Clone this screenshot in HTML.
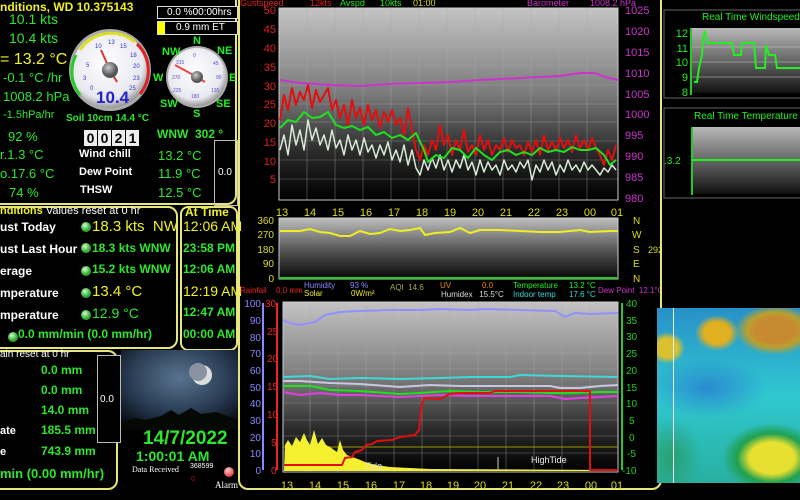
<!DOCTYPE html>
<html><head><meta charset="utf-8"><style>
*{margin:0;padding:0;box-sizing:border-box}
body{width:800px;height:500px;background:#000;overflow:hidden;position:relative;font-family:"Liberation Sans",Arial,sans-serif}
.t{position:absolute;white-space:nowrap;line-height:1}
.g{color:#2ee62e}.y{color:#f0f020}.w{color:#fff}
.b{font-weight:bold}
.box{position:absolute;border:1px solid #e8e8a0}
</style></head><body>

<!-- LEFT TOP PANEL -->
<div class="box" style="left:-10px;top:-10px;width:247px;height:215px;border:2px solid #e6e67a;border-radius:10px"></div>
<div class="t y b" style="left:0;top:1px;font-size:12px">nditions, WD 10.375143</div>
<div class="box" style="left:157px;top:6px;width:81px;height:13px;background:#000;border:1px solid #ddd"></div>
<div class="t w" style="left:167px;top:8px;font-size:10px">0.0 %00:00hrs</div>
<div class="box" style="left:157px;top:21px;width:81px;height:14px;border:1px solid #ddd;background:#000"></div>
<div style="position:absolute;left:158px;top:22px;width:7px;height:12px;background:#ff0"></div>
<div class="t w" style="left:176px;top:23px;font-size:10px">0.9 mm ET</div>

<div class="t g" style="left:9px;top:12px;font-size:14px">10.1 kts</div>
<div class="t g" style="left:9px;top:31px;font-size:14px">10.4 kts</div>
<div class="t y" style="left:0;top:52px;font-size:16px">= 13.2 °C</div>
<div class="t g" style="left:3px;top:71px;font-size:13px">-0.1 °C /hr</div>
<div class="t g" style="left:3px;top:90px;font-size:13px">1008.2 hPa</div>
<div class="t g" style="left:3px;top:110px;font-size:11px">-1.5hPa/hr</div>
<div class="t g b" style="left:66px;top:114px;font-size:10px">Soil 10cm 14.4 °C</div>
<div class="t g" style="left:8px;top:130px;font-size:13px">92 %</div>
<div style="position:absolute;left:84px;top:130px;display:flex;gap:1px">
<div style="width:13px;height:16px;background:#eee;color:#000;font:bold 14px 'Liberation Sans';text-align:center;line-height:16px">0</div>
<div style="width:13px;height:16px;background:#eee;color:#000;font:bold 14px 'Liberation Sans';text-align:center;line-height:16px">0</div>
<div style="width:13px;height:16px;background:#eee;color:#000;font:bold 14px 'Liberation Sans';text-align:center;line-height:16px">2</div>
<div style="width:13px;height:16px;background:#eee;color:#000;font:bold 14px 'Liberation Sans';text-align:center;line-height:16px">1</div></div>
<div class="t g b" style="left:157px;top:128px;font-size:12px">WNW &nbsp;302 °</div>
<div class="t g" style="left:0;top:148px;font-size:13px">r.1.3 °C</div>
<div class="t g" style="left:0;top:167px;font-size:13px">o.17.6 °C</div>
<div class="t g" style="left:9px;top:186px;font-size:13px">74 %</div>
<div class="t w b" style="left:79px;top:149px;font-size:11px">Wind chill</div>
<div class="t w b" style="left:79px;top:167px;font-size:11px">Dew Point</div>
<div class="t w b" style="left:80px;top:185px;font-size:11px">THSW</div>
<div class="t g" style="left:158px;top:149px;font-size:13px">13.2 °C</div>
<div class="t g" style="left:158px;top:167px;font-size:13px">11.9 °C</div>
<div class="t g" style="left:158px;top:186px;font-size:13px">12.5 °C</div>
<div class="box" style="left:214px;top:140px;width:24px;height:66px;border:1px solid #bbb"></div>
<div class="t w" style="left:218px;top:168px;font-size:10px">0.0</div>

<!-- gauges -->
<svg style="position:absolute;left:0;top:0" width="240" height="130">
<defs><radialGradient id="gg" cx="45%" cy="40%" r="60%"><stop offset="0" stop-color="#fff"/><stop offset=".8" stop-color="#e8e8f0"/><stop offset="1" stop-color="#9a9a9a"/></radialGradient>
<radialGradient id="hub" cx="40%" cy="35%"><stop offset="0" stop-color="#ccc"/><stop offset="1" stop-color="#555"/></radialGradient></defs>
<circle cx="110" cy="70" r="41" fill="#aaa"/><circle cx="110" cy="70" r="38" fill="url(#gg)"/>
<path d="M80 95 A37 37 0 0 1 76 55" stroke="#2c2" stroke-width="3" fill="none"/>
<path d="M80 50 A37 37 0 0 1 135 42" stroke="#dd2" stroke-width="3" fill="none"/>
<path d="M137 44 A37 37 0 0 1 140 94" stroke="#d22" stroke-width="3" fill="none"/>
<g fill="#33c" font-size="6"><text x="95" y="48">10</text><text x="108" y="44">13</text><text x="120" y="48">15</text><text x="130" y="57">18</text><text x="133" y="68">20</text><text x="133" y="80">23</text><text x="129" y="90">25</text><text x="83" y="80">3</text><text x="90" y="90">0</text><text x="86" y="67">5</text></g>
<line x1="110" y1="70" x2="101" y2="50" stroke="#d33" stroke-width="2"/><line x1="110" y1="70" x2="117" y2="82" stroke="#d33" stroke-width="2"/>
<circle cx="110" cy="70" r="8" fill="url(#hub)"/>
<text x="96" y="103" fill="#22c" font-size="17" font-weight="bold" font-family="Liberation Sans">10.4</text>
<circle cx="197" cy="77" r="31" fill="#aaa"/><circle cx="197" cy="77" r="29" fill="url(#gg)"/>
<g fill="#55c" font-size="5"><text x="193" y="57">0</text><text x="213" y="65">45</text><text x="216" y="79">90</text><text x="211" y="92">135</text><text x="191" y="98">180</text><text x="173" y="92">225</text><text x="172" y="79">270</text><text x="176" y="64">315</text></g>
<line x1="197" y1="77" x2="175" y2="65" stroke="#e44" stroke-width="2"/><line x1="197" y1="77" x2="205" y2="82" stroke="#e44" stroke-width="2"/>
<circle cx="197" cy="77" r="6" fill="url(#hub)"/>
<g fill="#2e2" font-weight="bold" font-size="11" font-family="Liberation Sans"><text x="193" y="44">N</text><text x="162" y="55">NW</text><text x="217" y="54">NE</text><text x="153" y="81">W</text><text x="229" y="81">E</text><text x="160" y="107">SW</text><text x="216" y="107">SE</text><text x="193" y="117">S</text></g>
</svg>

<!-- LEFT MID PANEL -->
<div class="box" style="left:-10px;top:206px;width:188px;height:143px;border:2px solid #e6e67a;border-radius:10px"></div>
<div class="box" style="left:180px;top:206px;width:58px;height:145px;border:2px solid #e6e67a;border-radius:8px"></div>
<div class="t" style="left:0;top:206px;font-size:11px"><span class="y b">nditions</span> <span class="w">Values reset at 0 hr</span></div>
<div class="t y b" style="left:185px;top:206px;font-size:12px">At Time</div>
<div class="t w b" style="left:0;top:221px;font-size:12px">ust Today</div>
<div class="t w b" style="left:0;top:243px;font-size:12px">ust Last Hour</div>
<div class="t w b" style="left:0;top:265px;font-size:12px">erage</div>
<div class="t w b" style="left:0;top:287px;font-size:12px">mperature</div>
<div class="t w b" style="left:0;top:309px;font-size:12px">mperature</div>
<svg style="position:absolute;left:0;top:200px" width="180" height="150"><defs><radialGradient id="ball" cx="40%" cy="35%"><stop offset="0" stop-color="#cfc"/><stop offset="1" stop-color="#3a3"/></radialGradient></defs>
<circle cx="86" cy="27" r="5" fill="url(#ball)"/><circle cx="86" cy="48" r="5" fill="url(#ball)"/><circle cx="86" cy="71" r="5" fill="url(#ball)"/><circle cx="86" cy="93" r="5" fill="url(#ball)"/><circle cx="86" cy="115" r="5" fill="url(#ball)"/><circle cx="13" cy="137" r="5" fill="url(#ball)"/></svg>
<div class="t y" style="left:92px;top:219px;font-size:15px">18.3 kts &nbsp;NW</div>
<div class="t g b" style="left:92px;top:242px;font-size:12px">18.3 kts WNW</div>
<div class="t g b" style="left:92px;top:263px;font-size:12px">15.2 kts WNW</div>
<div class="t y" style="left:92px;top:284px;font-size:15px">13.4 °C</div>
<div class="t g" style="left:92px;top:306px;font-size:14px">12.9 °C</div>
<div class="t g b" style="left:18px;top:328px;font-size:12px">0.0 mm/min (0.0 mm/hr)</div>
<div class="t y" style="left:183px;top:219px;font-size:14px">12:06 AM</div>
<div class="t g b" style="left:183px;top:242px;font-size:12px">23:58 PM</div>
<div class="t g b" style="left:183px;top:263px;font-size:12px">12:06 AM</div>
<div class="t y" style="left:183px;top:284px;font-size:14px">12:19 AM</div>
<div class="t g b" style="left:183px;top:306px;font-size:12px">12:47 AM</div>
<div class="t g b" style="left:183px;top:328px;font-size:12px">00:00 AM</div>

<!-- LEFT BOTTOM -->
<div class="box" style="left:-10px;top:350px;width:128px;height:140px;border:2px solid #e6e67a;border-radius:10px"></div>
<div class="t w" style="left:0;top:350px;font-size:10px">ain reset at 0 hr</div>
<div class="t g b" style="left:41px;top:364px;font-size:12px">0.0 mm</div>
<div class="t g b" style="left:41px;top:384px;font-size:12px">0.0 mm</div>
<div class="t g b" style="left:41px;top:404px;font-size:12px">14.0 mm</div>
<div class="t w b" style="left:0;top:426px;font-size:11px">ate</div>
<div class="t g b" style="left:41px;top:424px;font-size:12px">185.5 mm</div>
<div class="t w b" style="left:0;top:447px;font-size:11px">e</div>
<div class="t g b" style="left:41px;top:445px;font-size:12px">743.9 mm</div>
<div class="t g b" style="left:0;top:467px;font-size:13px">min (0.00 mm/hr)</div>
<div class="box" style="left:97px;top:355px;width:24px;height:88px;border:1px solid #bbb;background:#000"></div>
<div class="t w" style="left:100px;top:395px;font-size:10px">0.0</div>
<svg style="position:absolute;left:121px;top:350px" width="117" height="80"><defs><radialGradient id="sky" cx="50%" cy="35%" r="70%"><stop offset="0" stop-color="#5a7390"/><stop offset=".6" stop-color="#2a3d55"/><stop offset="1" stop-color="#0a0f18"/></radialGradient></defs>
<rect width="117" height="80" fill="url(#sky)"/><circle cx="81" cy="25" r="10" fill="#ddd"/><circle cx="77" cy="22" r="9" fill="#8a94a0"/>
<path d="M0 80 L0 72 L15 68 L25 70 L40 66 L50 60 L58 65 L70 58 L80 64 L95 62 L117 70 L117 80Z" fill="#050805"/></svg>
<div class="t g b" style="left:143px;top:429px;font-size:19px">14/7/2022</div>
<div class="t g b" style="left:136px;top:449px;font-size:14px">1:00:01 AM</div>
<div class="t w" style="left:132px;top:466px;font-size:8px;font-family:'Liberation Serif'">Data Received</div>
<div class="t w" style="left:190px;top:463px;font-size:7px">368599</div>
<div class="t" style="left:191px;top:476px;font-size:7px;color:#c00">0</div>
<div style="position:absolute;left:224px;top:467px;width:10px;height:10px;border-radius:50%;background:radial-gradient(circle at 40% 35%,#fcc,#d00)"></div>
<div class="t w" style="left:215px;top:481px;font-size:9px;font-family:'Liberation Serif'">Alarm</div>

<!-- CENTER PANEL -->
<div class="box" style="left:238px;top:-10px;width:424px;height:500px;border:2px solid #e6e67a;border-radius:10px"></div>
<svg style="position:absolute;left:240px;top:0" width="420" height="492" font-family="Liberation Sans">
<defs>
<linearGradient id="pg" x1="0" y1="0" x2="0" y2="1"><stop offset="0" stop-color="#c4c4c4"/><stop offset=".45" stop-color="#7a7a7a"/><stop offset=".75" stop-color="#2a2a2a"/><stop offset="1" stop-color="#000"/></linearGradient>
<linearGradient id="pg2" x1="0" y1="0" x2="0" y2="1"><stop offset="0" stop-color="#bebebe"/><stop offset=".5" stop-color="#5a5a5a"/><stop offset="1" stop-color="#050505"/></linearGradient>
</defs>
<g font-size="9">
<text x="0" y="6" fill="#e02020">Gustspeed</text><text x="70" y="6" fill="#e02020">12kts</text><text x="100" y="6" fill="#2e2">Avspd</text><text x="140" y="6" fill="#2e2">10kts</text><text x="173" y="6" fill="#dd2">01:00</text><text x="287" y="6" fill="#c3c">Barometer</text><text x="350" y="6" fill="#c3c">1008.2 hPa</text></g>
<rect x="39" y="8" width="339" height="192" fill="url(#pg)" stroke="#ccc"/>
<g stroke="#aaa" stroke-width=".6" opacity=".6">
<path d="M67 8V200M95 8V200M123 8V200M151 8V200M179 8V200M207 8V200M235 8V200M263 8V200M291 8V200M319 8V200M347 8V200"/>
<path d="M39 28H378M39 47H378M39 66H378M39 85H378M39 104H378M39 122H378M39 141H378M39 160H378M39 179H378"/></g>
<g fill="#e02020" font-size="11" text-anchor="end"><text x="36" y="14">50</text><text x="36" y="33">45</text><text x="36" y="52">40</text><text x="36" y="71">35</text><text x="36" y="90">30</text><text x="36" y="108">25</text><text x="36" y="127">20</text><text x="36" y="146">15</text><text x="36" y="165">10</text><text x="36" y="183">5</text></g>
<g fill="#c3c" font-size="11"><text x="385" y="14">1025</text><text x="385" y="35">1020</text><text x="385" y="56">1015</text><text x="385" y="77">1010</text><text x="385" y="98">1005</text><text x="385" y="118">1000</text><text x="385" y="139">995</text><text x="385" y="160">990</text><text x="385" y="181">985</text><text x="385" y="202">980</text></g>
<g fill="#dd2" font-size="11" text-anchor="middle"><text x="42" y="216">13</text><text x="70" y="216">14</text><text x="98" y="216">15</text><text x="126" y="216">16</text><text x="154" y="216">17</text><text x="182" y="216">18</text><text x="210" y="216">19</text><text x="238" y="216">20</text><text x="266" y="216">21</text><text x="294" y="216">22</text><text x="322" y="216">23</text><text x="350" y="216">00</text><text x="377" y="216">01</text></g>
<g transform="translate(-240,0)" fill="none" stroke-linejoin="round">
<polyline stroke="#c3c" stroke-width="2" points="280,80 300,83 330,85 360,86 390,84 420,83 450,82 480,80 500,79 520,78 540,77 560,76 580,73 595,73 605,77 618,80"/>
<polyline stroke="#e01010" stroke-width="2" points="280,120 284,95 288,110 292,88 296,105 300,92 304,100 308,85 312,108 316,90 320,102 324,95 328,88 332,110 336,100 340,118 344,105 348,125 352,100 356,118 360,108 364,125 368,105 372,120 376,110 380,128 384,112 388,122 392,110 396,125 400,118 404,135 408,108 412,130 416,150 420,160 424,145 428,155 432,140 436,150 440,125 444,145 448,135 452,155 456,140 460,150 464,130 468,152 472,145 476,155 480,135 484,150 488,140 492,155 496,145 500,150 504,138 508,152 512,140 516,148 520,145 524,155 528,142 532,152 536,140 540,155 544,135 548,150 552,142 556,150 560,138 564,148 568,140 572,152 576,135 580,148 584,140 588,150 592,138 596,148 600,155 604,165 608,150 612,160 616,145"/>
<polyline stroke="#d8ecd8" stroke-width="1.5" points="280,150 284,135 288,155 292,125 296,145 300,130 304,150 308,120 312,140 316,128 320,145 324,135 328,150 332,130 336,148 340,140 344,155 348,135 352,150 356,140 360,155 364,138 368,152 372,145 376,158 380,145 384,155 388,142 392,160 396,150 400,162 404,145 408,165 412,150 416,168 420,175 424,160 428,170 432,158 436,168 440,155 444,170 448,160 452,172 456,160 460,168 464,155 468,170 472,162 476,175 480,160 484,172 488,162 492,170 496,165 500,175 504,160 508,170 512,165 516,172 520,162 524,168 528,160 532,180 536,165 540,172 544,160 548,170 552,162 556,175 560,165 564,172 568,160 572,170 576,165 580,172 584,162 588,170 592,165 596,170 600,175 604,168 608,172 612,165 616,170"/>
<polyline stroke="#20e020" stroke-width="2" points="280,128 288,120 296,122 304,112 312,118 320,117 328,112 336,125 344,128 352,126 360,130 368,127 376,135 384,132 392,138 400,135 408,140 416,133 424,150 428,162 436,155 444,158 452,148 460,150 468,158 476,148 484,155 492,160 500,152 508,150 516,155 524,152 532,155 540,148 548,152 556,150 564,152 572,147 580,150 588,150 596,148 604,155 610,165 616,160"/>
</g>
<rect x="39" y="218" width="339" height="61" fill="url(#pg2)" stroke="#ccc"/>
<line x1="39" y1="278" x2="378" y2="278" stroke="#2c2" stroke-width="2"/>
<polyline fill="none" stroke="#ee2" stroke-width="2" points="40,231 60,231 70,229 80,232 90,233 100,236 110,236 120,231 130,234 140,233 150,229 160,231 170,230 180,228 185,235 195,233 210,232 220,228 230,233 240,230 260,230 280,231 300,232 320,232 340,230 350,232 370,231 378,231"/>
<g fill="#dd2" font-size="10" text-anchor="end"><text x="34" y="224">360</text><text x="34" y="238">270</text><text x="34" y="253">180</text><text x="34" y="267">90</text><text x="34" y="282">0</text></g>
<g fill="#dd2" font-size="10"><text x="393" y="224">N</text><text x="392" y="238">W</text><text x="393" y="253">S</text><text x="393" y="267">E</text><text x="393" y="282">N</text><text x="408" y="253" font-size="9">292</text></g>
<g font-size="8"><text x="0" y="293" fill="#e22">Rainfall</text><text x="36" y="293" fill="#e22">0.0 mm</text><text x="64" y="288" fill="#88f">Humidity</text><text x="110" y="288" fill="#88f">93 %</text><text x="64" y="296" fill="#ee2">Solar</text><text x="111" y="296" fill="#ee2">0W/m²</text><text x="150" y="290" fill="#aa5">AQI &nbsp;14.6</text><text x="200" y="288" fill="#e80">UV</text><text x="242" y="288" fill="#e80">0.0</text><text x="201" y="297" fill="#ddd">Humidex &nbsp;&nbsp;15.5°C</text><text x="273" y="288" fill="#2e2">Temperature</text><text x="329" y="288" fill="#2e2">13.2 °C</text><text x="273" y="297" fill="#3dd">Indoor temp</text><text x="329" y="297" fill="#3dd">17.6 °C</text><text x="358" y="293" fill="#c3c">Dew Point &nbsp;12.1°C</text></g>
<rect x="43" y="302" width="335" height="170" fill="url(#pg)" stroke="#ccc"/>
<g stroke="#aaa" stroke-width=".6" opacity=".6">
<path d="M70 302V472M98 302V472M126 302V472M154 302V472M182 302V472M210 302V472M238 302V472M266 302V472M294 302V472M322 302V472M350 302V472"/>
<path d="M43 319H378M43 336H378M43 353H378M43 369H378M43 386H378M43 403H378M43 420H378M43 436H378M43 453H378"/></g>
<line x1="43" y1="447" x2="378" y2="447" stroke="#990" stroke-width="1"/>
<line x1="23" y1="303" x2="23" y2="470" stroke="#88f" stroke-width="2"/>
<line x1="37" y1="303" x2="37" y2="470" stroke="#e22" stroke-width="2"/>
<line x1="382" y1="303" x2="382" y2="470" stroke="#2c2" stroke-width="2"/>
<g fill="#88f" font-size="10" text-anchor="end"><text x="21" y="307">100</text><text x="21" y="324">90</text><text x="21" y="341">80</text><text x="21" y="357">70</text><text x="21" y="374">60</text><text x="21" y="391">50</text><text x="21" y="407">40</text><text x="21" y="424">30</text><text x="21" y="441">20</text><text x="21" y="457">10</text><text x="21" y="474">0</text></g>
<g fill="#e22" font-size="10"><text x="25" y="307">30</text><text x="27" y="335">25</text><text x="27" y="362">20</text><text x="27" y="390">15</text><text x="27" y="418">10</text><text x="31" y="446">5</text><text x="31" y="474">0</text></g>
<g fill="#2c2" font-size="10"><text x="386" y="307">40</text><text x="386" y="324">35</text><text x="386" y="340">30</text><text x="386" y="357">25</text><text x="386" y="374">20</text><text x="386" y="391">15</text><text x="386" y="407">10</text><text x="389" y="424">5</text><text x="389" y="441">0</text><text x="387" y="457">-5</text><text x="382" y="474">-10</text></g>
<g fill="#dd2" font-size="11" text-anchor="middle"><text x="47" y="489">13</text><text x="75" y="489">14</text><text x="103" y="489">15</text><text x="131" y="489">16</text><text x="159" y="489">17</text><text x="186" y="489">18</text><text x="213" y="489">19</text><text x="240" y="489">20</text><text x="268" y="489">21</text><text x="296" y="489">22</text><text x="323" y="489">23</text><text x="351" y="489">00</text><text x="377" y="489">01</text></g>
<g transform="translate(-240,0)" fill="none" stroke-linejoin="round">
<path fill="#f4f030" stroke="none" d="M284,470 L285,445 288,440 292,446 296,437 300,442 304,433 307,440 310,445 314,430 318,444 322,438 326,445 330,447 334,450 337,452 340,440 343,450 347,455 352,457 358,459 365,462 375,465 390,467 410,468 430,469 618,470 618,471 284,471Z"/>
<polyline stroke="#9090ff" stroke-width="2" points="283,320 290,323 300,325 315,322 325,315 340,312 360,311 390,310 420,310 440,309 470,310 485,309 520,310 555,311 565,317 575,313 590,314 618,313"/>
<polyline stroke="#40d8d8" stroke-width="2" points="283,377 310,376 330,379 360,378 400,379 440,378 470,377 510,377 520,375 560,376 618,377"/>
<polyline stroke="#c8c8e0" stroke-width="2" points="283,381 300,381 330,383 360,384 400,387 430,385 460,386 490,386 520,386 550,386 560,388 580,388 600,386 618,385"/>
<polyline stroke="#20e020" stroke-width="2" points="283,386 310,386 330,390 360,391 400,394 420,393 450,391 480,392 520,392 550,393 570,393 600,392 618,392"/>
<polyline stroke="#e040e0" stroke-width="2" points="283,392 300,395 320,393 340,395 360,395 400,397 420,396 440,395 470,396 520,396 550,396 565,399 580,398 600,397 618,396"/>
<polyline stroke="#e01010" stroke-width="2" points="284,465 342,465 345,458 352,457 355,452 362,450 366,445 372,444 377,441 392,440 400,437 415,435 419,430 422,403 424,398 440,399 450,394 460,393 490,393 495,391 590,391 590,470 618,470"/>
</g>
<text x="125" y="469" fill="#ddd" font-size="9">Tide</text>
<line x1="258" y1="457" x2="258" y2="470" stroke="#ccc"/>
<text x="291" y="463" fill="#eee" font-size="9">HighTide</text>
</svg>

<!-- RIGHT PANEL -->
<svg style="position:absolute;left:662px;top:0" width="138" height="310" font-family="Liberation Sans">
<defs><linearGradient id="rg" x1="0" y1="0" x2="0" y2="1"><stop offset="0" stop-color="#b8b8b8"/><stop offset=".6" stop-color="#555"/><stop offset="1" stop-color="#111"/></linearGradient></defs>
<rect x="2" y="10" width="140" height="88" fill="#000" stroke="#666"/>
<text x="40" y="20" fill="#2e2" font-size="10">Real Time Windspeed</text>
<rect x="30" y="28" width="110" height="65" fill="url(#rg)"/>
<g stroke="#ccc" stroke-width=".6"><path d="M30 47H140M30 62H140M30 77H140"/></g>
<line x1="29" y1="28" x2="29" y2="95" stroke="#2c2" stroke-width="2"/>
<g fill="#2e2" font-size="11" text-anchor="end"><text x="26" y="37">12</text><text x="26" y="52">11</text><text x="26" y="66">10</text><text x="26" y="81">9</text><text x="26" y="96">8</text></g>
<polyline fill="none" stroke="#2e2" stroke-width="2" points="32,82 35,82 37,68 40,55 41,38 43,31 45,43 70,43 72,55 79,55 80,43 92,43 94,68 103,68 104,45 107,55 113,55 115,68 140,68"/>
<rect x="2" y="108" width="140" height="90" fill="#000" stroke="#666"/>
<text x="32" y="119" fill="#2e2" font-size="10">Real Time Temperature</text>
<rect x="30" y="127" width="110" height="67" fill="url(#rg)"/>
<line x1="30" y1="127" x2="30" y2="195" stroke="#2c2" stroke-width="2"/>
<line x1="30" y1="160" x2="140" y2="160" stroke="#2e2" stroke-width="2"/>
<text x="2" y="164" fill="#2e2" font-size="10">.3.2</text>
</svg>
<!-- satellite -->
<div style="position:absolute;left:657px;top:308px;width:143px;height:175px;background:
radial-gradient(ellipse 22px 18px at 60px 25px,#e0b020 60%,transparent),
radial-gradient(ellipse 40px 25px at 118px 22px,#c88a30 50%,#b8a030 70%,transparent),
radial-gradient(ellipse 50px 35px at 115px 150px,#e8e030 45%,#20a050 70%,transparent),
radial-gradient(ellipse 18px 16px at 10px 40px,#d8c030 60%,transparent),
radial-gradient(ellipse 60px 30px at 50px 80px,#2a8ad0,transparent),
radial-gradient(ellipse 30px 40px at 15px 150px,#28a070,transparent),
linear-gradient(180deg,#2890c8,#30c8d0 50%,#28b0a0)"></div>
<div style="position:absolute;left:673px;top:308px;width:1px;height:175px;background:#eee"></div>
</body></html>
